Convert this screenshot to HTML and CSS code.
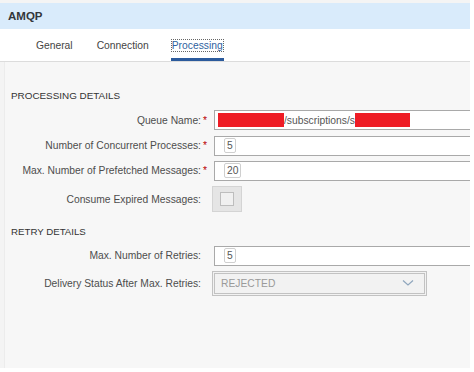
FILE: index.html
```html
<!DOCTYPE html>
<html lang="en">
<head>
  <meta charset="UTF-8" />
  <title>AMQP</title>
  <link rel="stylesheet" href="styles.css">
</head>
<body>
  <div class="frame">
    <div class="header">AMQP</div>
    <div class="tabs">
      <div class="tab">General</div>
      <div class="tab">Connection</div>
      <div class="tab active"><span class="focus">Processing</span></div>
    </div>
    <div class="content">
      <div class="section-title">PROCESSING DETAILS</div>
      <div class="row first-row">
        <label>Queue Name:<span class="req">*</span></label>
        <div class="input">
          <span class="redact first"></span><span class="txt">/subscriptions/s</span><span class="redact second"></span>
        </div>
      </div>
      <div class="row">
        <label>Number of Concurrent Processes:<span class="req">*</span></label>
        <div class="input"><span class="val">5</span></div>
      </div>
      <div class="row">
        <label>Max. Number of Prefetched Messages:<span class="req">*</span></label>
        <div class="input"><span class="val">20</span></div>
      </div>
      <div class="row check-row">
        <label>Consume Expired Messages:<span class="req blank">*</span></label>
        <div class="check-wrap"><span class="check"></span></div>
      </div>

      <div class="section-title retry">RETRY DETAILS</div>
      <div class="row">
        <label>Max. Number of Retries:<span class="req blank">*</span></label>
        <div class="input"><span class="val">5</span></div>
      </div>
      <div class="row select-row">
        <label>Delivery Status After Max. Retries:<span class="req blank">*</span></label>
        <div class="select">
          <span class="select-val">REJECTED</span>
          <svg class="arrow" width="12" height="8" viewBox="0 0 12 8"><path d="M1 1.5 L6 6 L11 1.5" fill="none" stroke="#8fa6bd" stroke-width="1.2"/></svg>
        </div>
      </div>
    </div>
  </div>
</body>
</html>
```

FILE: styles.css
```css
body {
  margin: 0;
  background: #ffffff;
  font-family: "Liberation Sans", Arial, sans-serif;
  color: #32363a;
}
.frame {
  width: 470px;
  padding-top: 3px;
  background: #f4f4f4;
}
.header {
  height: 26px;
  line-height: 26px;
  padding-left: 8px;
  background: #d9ebfb;
  font-size: 11.5px;
  font-weight: bold;
  color: #32363a;
}
.tabs {
  height: 32px;
  display: flex;
  align-items: flex-end;
  padding-left: 36px;
  gap: 24px;
  background: #ffffff;
  border-bottom: 1px solid #dcdcdc;
}
.tab {
  font-size: 10.3px;
  color: #444;
  height: 25px;
  box-sizing: border-box;
  padding-top: 4px;
}
.tab.active {
  border-bottom: 3px solid #2b5a9c;
  margin-left: -2px;
  padding: 4px 1px 0;
}
.tab .focus {
  outline: 1px dotted #666;
  color: #2f5fa0;
}
.content {
  height: 279px;
  background: #f7f7f7;
  padding: 27px 0 0 0;
  margin-left: 4px;
  border-left: 1px solid #ececec;
}
.section-title {
  font-size: 9.9px;
  line-height: 13px;
  color: #333;
  padding-left: 6px;
  margin-bottom: 5px;
}
.section-title.retry {
  font-size: 9.7px;
  margin-top: 11px;
}
.row {
  display: flex;
  align-items: center;
  height: 25px;
}
.row.first-row {
  height: 26px;
}
.row label {
  width: 202px;
  text-align: right;
  font-size: 10.3px;
  color: #4d4d4d;
  flex-shrink: 0;
}
.req {
  color: #bb0000;
  margin-left: 2px;
}
.req.blank {
  visibility: hidden;
}
.input {
  margin-left: 7px;
  flex: 1;
  height: 18px;
  background: #ffffff;
  border: 1px solid #a9a9a9;
  border-right: none;
  display: flex;
  align-items: center;
  padding-left: 3px;
  font-size: 10.3px;
  color: #555;
}
.redact {
  display: inline-block;
  height: 14px;
  background: #ee1c25;
}
.redact.first {
  width: 66px;
}
.redact.second {
  width: 55px;
}
.val {
  margin-left: 6px;
  border: 1px solid #cfcfcf;
  border-radius: 2px;
  padding: 0 2px;
  line-height: 13px;
  font-size: 10.3px;
}
.check-row {
  height: 30px;
  margin-top: 1px;
}
.check-wrap {
  margin-left: 5px;
  width: 30px;
  height: 26px;
  background: #e5e5e5;
  border: 1px solid #d4d4d4;
  display: flex;
  align-items: center;
  justify-content: center;
  box-sizing: border-box;
}
.check {
  width: 12px;
  height: 12px;
  border: 1px solid #bdbdbd;
  background: #f0f0f0;
}
.select-row {
  height: 28px;
  margin-top: 1px;
}
.select {
  margin-left: 5px;
  width: 215px;
  height: 25px;
  box-sizing: border-box;
  border: 3px double #c2c2c2;
  background: #f2f2f2;
  display: flex;
  align-items: center;
  justify-content: space-between;
  padding: 0 10px 0 6px;
}
.select-val {
  font-size: 10.3px;
  color: #9a9a9a;
}
```
